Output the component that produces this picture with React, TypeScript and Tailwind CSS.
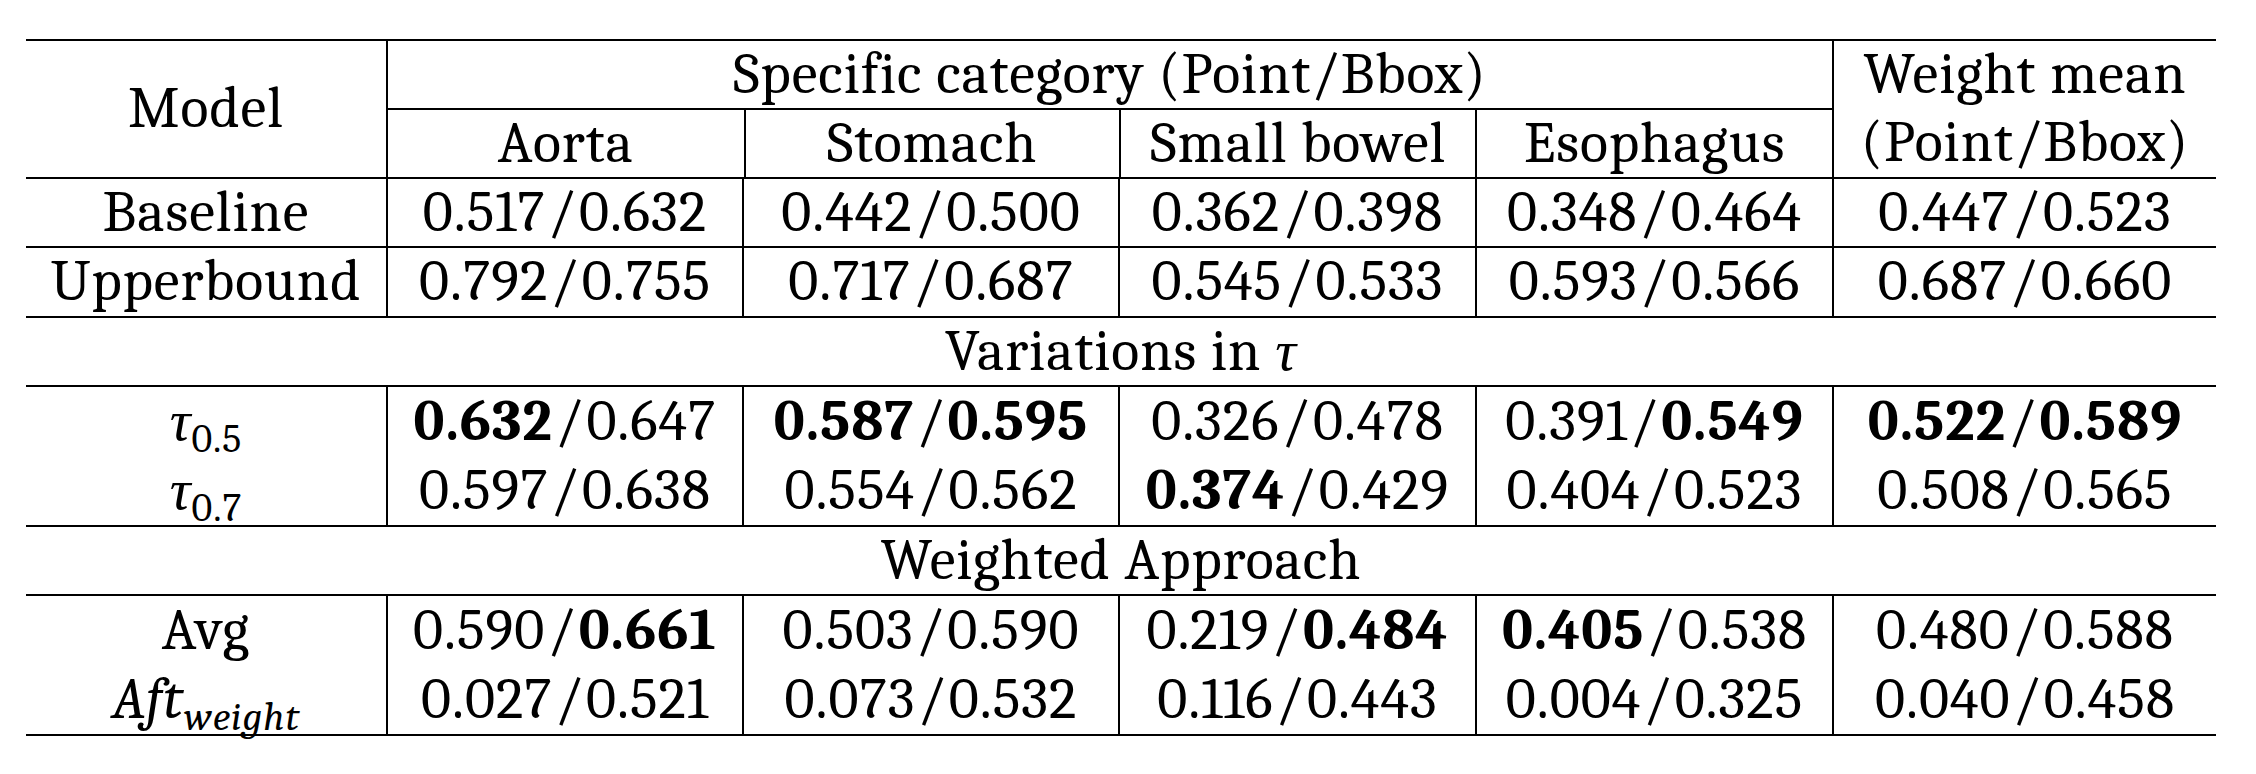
import React from 'react';

type Part = { t: string; b?: boolean };
type Row = { label: React.ReactNode; cells: Part[][] };

const widths = ['w-[356px]', 'w-[376px]', 'w-[357px]', 'w-[357px]', 'w-[384px]'];

const Num: React.FC<{ v: Part[] }> = ({ v }) => (
  <span className="whitespace-nowrap">
    <span className={v[0].b ? 'font-bold' : ''}>{v[0].t}</span>
    <span className="mx-[2px]">/</span>
    <span className={v[1].b ? 'font-bold' : ''}>{v[1].t}</span>
  </span>
);

const p = (t: string, b = false): Part => ({ t, b });

const Tau: React.FC<{ sub: string }> = ({ sub }) => (
  <span className="whitespace-nowrap">
    <span className="italic">τ</span>
    <span className="text-[40px] relative top-[12px]">{sub}</span>
  </span>
);

const DataRow: React.FC<{ row: Row; h: string }> = ({ row, h }) => (
  <div className={`flex ${h}`}>
    <div className="w-[360px] flex items-center justify-center">{row.label}</div>
    {row.cells.map((c, i) => (
      <div key={i} className={`${widths[i]} border-l-2 border-black flex items-center justify-center`}>
        <Num v={c} />
      </div>
    ))}
  </div>
);

const Group: React.FC<{ rows: Row[]; h: string }> = ({ rows, h }) => (
  <div className="border-b-2 border-black">
    {rows.map((r, i) => (
      <DataRow key={i} row={r} h={h} />
    ))}
  </div>
);

const Section: React.FC<{ children: React.ReactNode }> = ({ children }) => (
  <div className="h-[69px] border-b-2 border-black flex items-center justify-center">{children}</div>
);

export default function App() {
  const baseline: Row = {
    label: 'Baseline',
    cells: [
      [p('0.517'), p('0.632')],
      [p('0.442'), p('0.500')],
      [p('0.362'), p('0.398')],
      [p('0.348'), p('0.464')],
      [p('0.447'), p('0.523')],
    ],
  };
  const upper: Row = {
    label: 'Upperbound',
    cells: [
      [p('0.792'), p('0.755')],
      [p('0.717'), p('0.687')],
      [p('0.545'), p('0.533')],
      [p('0.593'), p('0.566')],
      [p('0.687'), p('0.660')],
    ],
  };
  const taus: Row[] = [
    {
      label: <Tau sub="0.5" />,
      cells: [
        [p('0.632', true), p('0.647')],
        [p('0.587', true), p('0.595', true)],
        [p('0.326'), p('0.478')],
        [p('0.391'), p('0.549', true)],
        [p('0.522', true), p('0.589', true)],
      ],
    },
    {
      label: <Tau sub="0.7" />,
      cells: [
        [p('0.597'), p('0.638')],
        [p('0.554'), p('0.562')],
        [p('0.374', true), p('0.429')],
        [p('0.404'), p('0.523')],
        [p('0.508'), p('0.565')],
      ],
    },
  ];
  const weighted: Row[] = [
    {
      label: 'Avg',
      cells: [
        [p('0.590'), p('0.661', true)],
        [p('0.503'), p('0.590')],
        [p('0.219'), p('0.484', true)],
        [p('0.405', true), p('0.538')],
        [p('0.480'), p('0.588')],
      ],
    },
    {
      label: (
        <span className="italic whitespace-nowrap">
          Aft<span className="text-[40px] relative top-[12px]">weight</span>
        </span>
      ),
      cells: [
        [p('0.027'), p('0.521')],
        [p('0.073'), p('0.532')],
        [p('0.116'), p('0.443')],
        [p('0.004'), p('0.325')],
        [p('0.040'), p('0.458')],
      ],
    },
  ];

  return (
    <div className="font-serif min-h-screen bg-white pl-[26px] pt-[39px] text-black text-[58px] leading-none tracking-[1px]">
      <div className="w-[2190px] border-t-2 border-black">
        {/* header */}
        <div className="flex border-b-2 border-black">
          <div className="w-[360px] flex items-center justify-center">Model</div>
          <div className="w-[1446px] border-l-2 border-black flex flex-col">
            <div className="h-[69px] border-b-2 border-black flex items-center justify-center">
              Specific category (Point/Bbox)
            </div>
            <div className="flex h-[67px]">
              {['Aorta', 'Stomach', 'Small bowel', 'Esophagus'].map((n, i) => (
                <div
                  key={n}
                  className={`${widths[i]} ${i > 0 ? 'border-l-2 border-black' : ''} flex items-center justify-center`}
                >
                  {n}
                </div>
              ))}
            </div>
          </div>
          <div className="w-[384px] border-l-2 border-black flex flex-col items-center justify-center leading-[68px]">
            <span>Weight mean</span>
            <span>(Point/Bbox)</span>
          </div>
        </div>

        <Group rows={[baseline]} h="h-[67px]" />
        <Group rows={[upper]} h="h-[68px]" />
        <Section>
          <span>
            Variations in <span className="italic">τ</span>
          </span>
        </Section>
        <Group rows={taus} h="h-[69px]" />
        <Section>Weighted Approach</Section>
        <Group rows={weighted} h="h-[69px]" />
      </div>
    </div>
  );
}
